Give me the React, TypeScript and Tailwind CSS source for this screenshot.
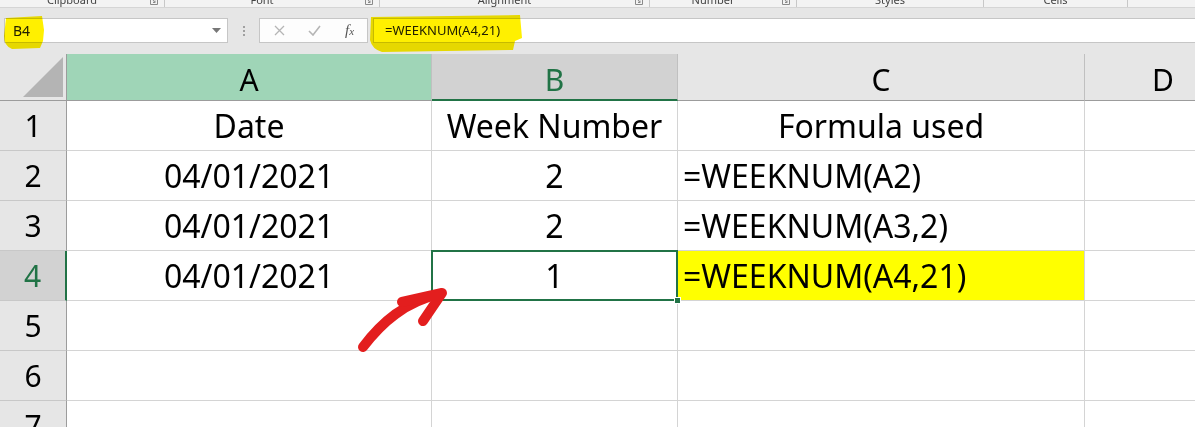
import { ReactNode } from "react";

const groups = [
  { label: "Clipboard", width: "w-[165px]", launcher: true },
  { label: "Font", width: "w-[215px]", launcher: true },
  { label: "Alignment", width: "w-[270px]", launcher: true },
  { label: "Number", width: "w-[147px]", launcher: true },
  { label: "Styles", width: "w-[187px]", launcher: false },
  { label: "Cells", width: "w-[144px]", launcher: false },
];

const rows: { a: string; b: string; c: string }[] = [
  { a: "Date", b: "Week Number", c: "Formula used" },
  { a: "04/01/2021", b: "2", c: "=WEEKNUM(A2)" },
  { a: "04/01/2021", b: "2", c: "=WEEKNUM(A3,2)" },
  { a: "04/01/2021", b: "1", c: "=WEEKNUM(A4,21)" },
  { a: "", b: "", c: "" },
  { a: "", b: "", c: "" },
  { a: "", b: "", c: "" },
];

function Launcher() {
  return (
    <svg className="absolute right-[6px] top-0 h-[6px] w-[8px]" viewBox="0 0 8 6">
      <path d="M0.5 0v4.5h7V0" fill="none" stroke="#8a8a8a" strokeWidth={1} />
      <path d="M3 0l2 2.5M5 0.5v2h-2" fill="none" stroke="#8a8a8a" strokeWidth={1} />
    </svg>
  );
}

function Cell({
  children,
  className = "",
}: {
  children?: ReactNode;
  className?: string;
}) {
  return (
    <div
      className={
        "flex h-[50px] items-center border-r border-b border-[#d4d4d4] text-[32px] text-black " +
        className
      }
    >
      {children}
    </div>
  );
}

export default function App() {
  return (
    <div className="relative h-[427px] w-[1195px] overflow-hidden bg-[#e6e6e6] font-['Noto_Sans',sans-serif]">
      {/* ribbon group labels, cut off at the top */}
      <div className="flex h-[8px] overflow-hidden border-b border-[#d5d5d5] bg-[#f3f3f3]">
        {groups.map((g) => (
          <div
            key={g.label}
            className={
              "relative flex shrink-0 justify-center border-r border-[#c8c8c8] " +
              g.width +
              (g.launcher ? " pr-[20px]" : "")
            }
          >
            <span className="-mt-[6px] text-[11px] leading-[11px] text-[#444]">
              {g.label}
            </span>
            {g.launcher && <Launcher />}
          </div>
        ))}
      </div>
      <div className="h-[10px]" />

      {/* formula bar */}
      <div className="flex h-[25px] items-stretch">
        <div className="ml-[4px] flex w-[224px] items-center justify-between border border-[#c6c6c6] bg-white pl-[8px] pr-[6px]">
          <span className="text-[14px] text-[#222]">B4</span>
          <svg className="h-[5px] w-[9px]" viewBox="0 0 9 5">
            <path d="M0 0h9L4.5 5z" fill="#777" />
          </svg>
        </div>
        <div className="flex w-[31px] flex-col items-center justify-center gap-[2px]">
          <span className="h-[2px] w-[2px] bg-[#a0a0a0]" />
          <span className="h-[2px] w-[2px] bg-[#a0a0a0]" />
          <span className="h-[2px] w-[2px] bg-[#a0a0a0]" />
        </div>
        <div className="flex w-[109px] items-center border border-[#c6c6c6] bg-[#fdfdfd] pl-[2px]">
          <div className="flex w-[36px] justify-center">
            <svg className="h-[11px] w-[11px]" viewBox="0 0 11 11">
              <path d="M1 1l9 9M10 1l-9 9" stroke="#b5b5b5" strokeWidth={1.3} />
            </svg>
          </div>
          <div className="flex w-[36px] justify-center">
            <svg className="h-[11px] w-[13px]" viewBox="0 0 13 11">
              <path d="M1 6l4 4 7-9" fill="none" stroke="#b5b5b5" strokeWidth={1.6} />
            </svg>
          </div>
          <div className="flex w-[36px] justify-center">
            <span className="font-['Liberation_Serif',serif] text-[15px] italic leading-none text-[#555]">
              f<span className="text-[11px]">x</span>
            </span>
          </div>
        </div>
        <div className="ml-[5px] flex flex-1 items-center border-y border-l border-[#c6c6c6] bg-white pl-[11px]">
          <span className="text-[13px] text-[#222]">=WEEKNUM(A4,21)</span>
        </div>
      </div>
      <div className="h-[11px]" />

      {/* sheet */}
      <div className="grid w-[1241px] grid-cols-[67px_365px_246px_407px_156px] bg-white">
        {/* column headers */}
        <div className="relative h-[47px] border-r border-b border-[#9c9c9c] bg-[#e6e6e6]">
          <svg className="absolute right-[3px] bottom-[3px] h-[40px] w-[40px]" viewBox="0 0 40 40">
            <path d="M40 0V40H0z" fill="#b4b4b4" />
          </svg>
        </div>
        <div className="flex h-[47px] items-center justify-center border-r border-b border-r-[#c0c0c0] border-b-[#9c9c9c] bg-[#9fd5b7] pt-[5px] text-[30px] text-black">
          A
        </div>
        <div className="flex h-[47px] items-center justify-center border-r border-b-2 border-r-[#c0c0c0] border-b-[#217346] bg-[#d2d2d2] pt-[6px] text-[30px] text-[#217346]">
          B
        </div>
        <div className="flex h-[47px] items-center justify-center border-r border-b border-r-[#c0c0c0] border-b-[#9c9c9c] bg-[#e6e6e6] pt-[5px] text-[30px] text-black">
          C
        </div>
        <div className="flex h-[47px] items-center justify-center border-b border-[#9c9c9c] bg-[#e6e6e6] pt-[5px] text-[30px] text-black">
          D
        </div>

        {/* rows */}
        {rows.map((r, i) => {
          const n = i + 1;
          const active = n === 4;
          return [
            <div
              key={"h" + n}
              className={
                "flex h-[50px] items-center justify-center border-b border-b-[#c8c8c8] text-[30px] " +
                (active
                  ? "border-r-2 border-r-[#217346] bg-[#d2d2d2] text-[#217346]"
                  : "border-r border-r-[#9c9c9c] bg-[#e6e6e6] text-black")
              }
            >
              {n}
            </div>,
            <Cell key={"a" + n} className="justify-center">
              {r.a}
            </Cell>,
            <Cell key={"b" + n} className={"justify-center" + (active ? " relative" : "")}>
              {r.b}
              {active && (
                <>
                  <div className="absolute -top-px -left-px -right-px -bottom-px border-2 border-[#217346]" />
                  <div className="absolute -right-[4px] -bottom-[4px] h-[7px] w-[7px] border border-white bg-[#217346]" />
                </>
              )}
            </Cell>,
            <Cell
              key={"c" + n}
              className={
                (n === 1 ? "justify-center" : "pl-[5px]") +
                (active ? " bg-[#ffff00]" : "")
              }
            >
              {r.c}
            </Cell>,
            <Cell key={"d" + n} className="border-r-0" />,
          ];
        })}
      </div>

      {/* annotations drawn on top of the screenshot */}
      <svg
        className="pointer-events-none absolute inset-0 h-[427px] w-[1195px] mix-blend-multiply"
        viewBox="0 0 1195 427"
      >
        <path
          d="M6 18 L42 16 L44 30 L43 41 L40 48 L12 49 Q4 46 4 36 Z"
          fill="#fff000"
        />
        <path
          d="M371 17 L520 15 L522 38 L515 41 L513 50 L382 52 Q372 49 370 40 Z"
          fill="#fff000"
        />
      </svg>
      <svg
        className="pointer-events-none absolute inset-0 h-[427px] w-[1195px]"
        viewBox="0 0 1195 427"
      >
        <path
          d="M363 347 C 382 322 405 302 440 294"
          fill="none"
          stroke="#e31e1e"
          strokeWidth={10}
          strokeLinecap="round"
        />
        <path
          d="M402 302 L442 293 L423 321"
          fill="none"
          stroke="#e31e1e"
          strokeWidth={10}
          strokeLinecap="round"
          strokeLinejoin="round"
        />
      </svg>
    </div>
  );
}
